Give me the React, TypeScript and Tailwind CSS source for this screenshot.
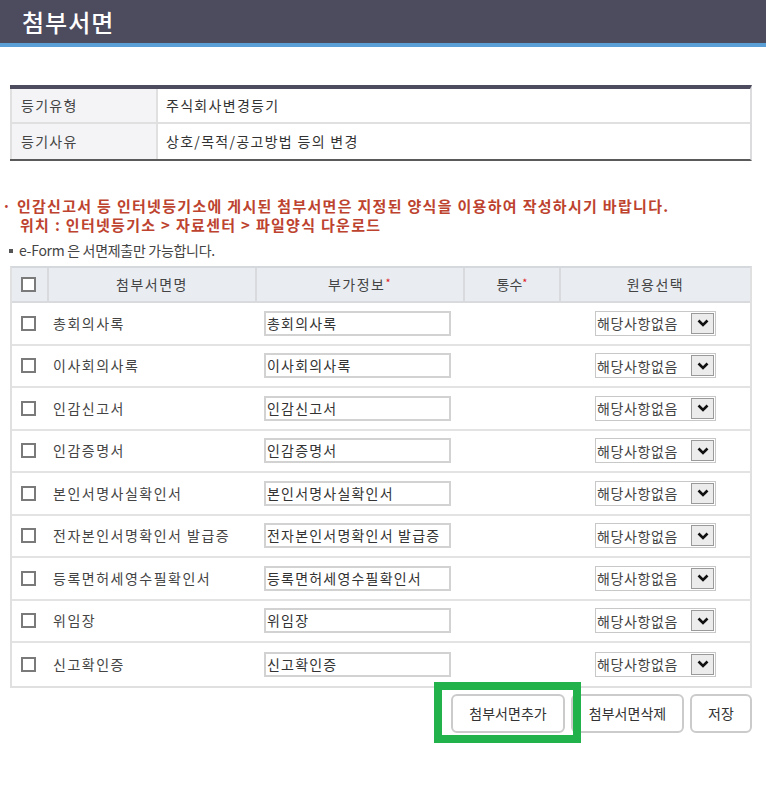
import React from 'react'

const FONT = { fontFamily: '"Noto Sans CJK KR", "Noto Sans", sans-serif' }

const docs = [
  '총회의사록',
  '이사회의사록',
  '인감신고서',
  '인감증명서',
  '본인서명사실확인서',
  '전자본인서명확인서 발급증',
  '등록면허세영수필확인서',
  '위임장',
  '신고확인증',
]

function Checkbox() {
  return <span className="block w-[15px] h-[15px] border-2 border-[#7a7a7a] bg-white" />
}

function SelectBox() {
  return (
    <div className="flex items-center w-[121px] h-[25px] border border-[#c8c8c8] bg-white">
      <span className="flex-1 pl-[1px] text-[14px] leading-none text-[#444] tracking-[0.6px] whitespace-nowrap">해당사항없음</span>
      <span className="flex items-center justify-center w-[23px] h-[21px] mr-[1px] bg-[#ececec] border border-[#9a9a9a]">
        <svg width="12" height="8" viewBox="0 0 12 8">
          <path d="M1.5 1.5 L6 6 L10.5 1.5" fill="none" stroke="#111" strokeWidth="2.6" />
        </svg>
      </span>
    </div>
  )
}

export default function App() {
  return (
    <div className="relative w-[766px] h-[786px] bg-white" style={FONT}>
      {/* title bar */}
      <div className="h-[47px] bg-[#4d4b5e] border-b-4 border-[#5a9fd6] flex items-center pl-[22px]">
        <h1 className="text-white text-[24px] font-medium leading-none tracking-[1px]">첨부서면</h1>
      </div>

      <div className="pl-[10px] pr-[14px]">
        {/* info table */}
        <div className="mt-[38px] border-t-4 border-[#4d4b5e] border-b-2 border-b-[#5a5a5a] border-r-2 border-r-[#dcdcdf] text-[14px] tracking-[1.3px]">
          <div className="flex h-[35px] border-b-2 border-[#e0e0e0]">
            <div className="w-[148px] bg-[#f4f4f6] border-l-2 border-[#e0e0e0] border-r-2 border-r-[#e0e0e0] flex items-center pl-[9px] text-[#444]">등기유형</div>
            <div className="flex-1 flex items-center pl-[8px] text-[#333]">주식회사변경등기</div>
          </div>
          <div className="flex h-[35px]">
            <div className="w-[148px] bg-[#f4f4f6] border-l-2 border-[#e0e0e0] border-r-2 border-r-[#e0e0e0] flex items-center pl-[9px] text-[#444]">등기사유</div>
            <div className="flex-1 flex items-center pl-[8px] text-[#333]">상호/목적/공고방법 등의 변경</div>
          </div>
        </div>
      </div>

      {/* notices */}
      <div className="mt-[35px] pl-[8px] text-[15px] font-bold text-[#bd432f] leading-[19px] tracking-[1.3px] whitespace-nowrap">
        <p className="-ml-[6px]">· 인감신고서 등 인터넷등기소에 게시된 첨부서면은 지정된 양식을 이용하여 작성하시기 바랍니다.</p>
        <p className="pl-[12px]">위치 : 인터넷등기소 &gt; 자료센터 &gt; 파일양식 다운로드</p>
      </div>
      <div className="mt-[6px] pl-[9px] flex items-center gap-[6px] text-[14px] text-[#444] tracking-[-0.3px]">
        <span className="block w-[4px] h-[4px] bg-[#555]" />
        <span>e-Form 은 서면제출만 가능합니다.</span>
      </div>

      {/* documents table */}
      <div className="pl-[10px] pr-[14px] mt-[5px]">
        <div className="border-t-2 border-[#d5d8dd] border-l-2 border-l-[#e0e0e0] border-r-2 border-r-[#e0e0e0] border-b-2 border-b-[#e0e0e0]">
          <div className="grid grid-cols-[37px_208px_208px_96px_1fr] h-[35px] bg-[#e9edf2] border-b-2 border-[#d8dadd] text-[14px] text-[#444]">
            <div className="flex items-center pl-[9px] border-r-2 border-[#d8dadd]"><Checkbox /></div>
            <div className="flex items-center justify-center border-r-2 border-[#d8dadd] tracking-[1.5px]">첨부서면명</div>
            <div className="flex items-center justify-center border-r-2 border-[#d8dadd] tracking-[1.5px]">부가정보<span className="text-[#e02020] text-[11px] -mt-[4px]">*</span></div>
            <div className="flex items-center justify-center border-r-2 border-[#d8dadd]">통수<span className="text-[#e02020] text-[11px] -mt-[4px]">*</span></div>
            <div className="flex items-center justify-center tracking-[1.5px]">원용선택</div>
          </div>
          {docs.map((d, i) => (
            <div
              key={d}
              className={`grid grid-cols-[37px_208px_208px_96px_1fr] h-[42.5px] text-[14px] text-[#444] ${i < docs.length - 1 ? 'border-b-2 border-[#e3e3e3]' : ''}`}
            >
              <div className="flex items-center pl-[9px]"><Checkbox /></div>
              <div className="flex items-center pl-[4px] tracking-[1.5px] whitespace-nowrap">{d}</div>
              <div className="flex items-center pl-[7px]">
                <div className="w-[187px] h-[25px] border-2 border-[#d2d2d2] flex items-center pl-[1px] text-[#333] tracking-[1.2px] whitespace-nowrap overflow-hidden">{d}</div>
              </div>
              <div />
              <div className="flex items-center pl-[34px]"><SelectBox /></div>
            </div>
          ))}
        </div>

        {/* buttons */}
        <div className="flex justify-end gap-[6px] mt-[6px] text-[14px] text-[#333]">
          <button className="w-[114px] h-[39px] rounded-[6px] border-2 border-[#cbcbcb] bg-white">첨부서면추가</button>
          <button className="w-[113px] h-[39px] rounded-[6px] border-2 border-[#cbcbcb] bg-white">첨부서면삭제</button>
          <button className="w-[62px] h-[39px] rounded-[6px] border-2 border-[#cbcbcb] bg-white">저장</button>
        </div>
      </div>

      {/* highlight annotation */}
      <div className="absolute left-[434px] top-[682px] w-[147px] h-[61px] border-[8px] border-[#22b24c] pointer-events-none" />
    </div>
  )
}
